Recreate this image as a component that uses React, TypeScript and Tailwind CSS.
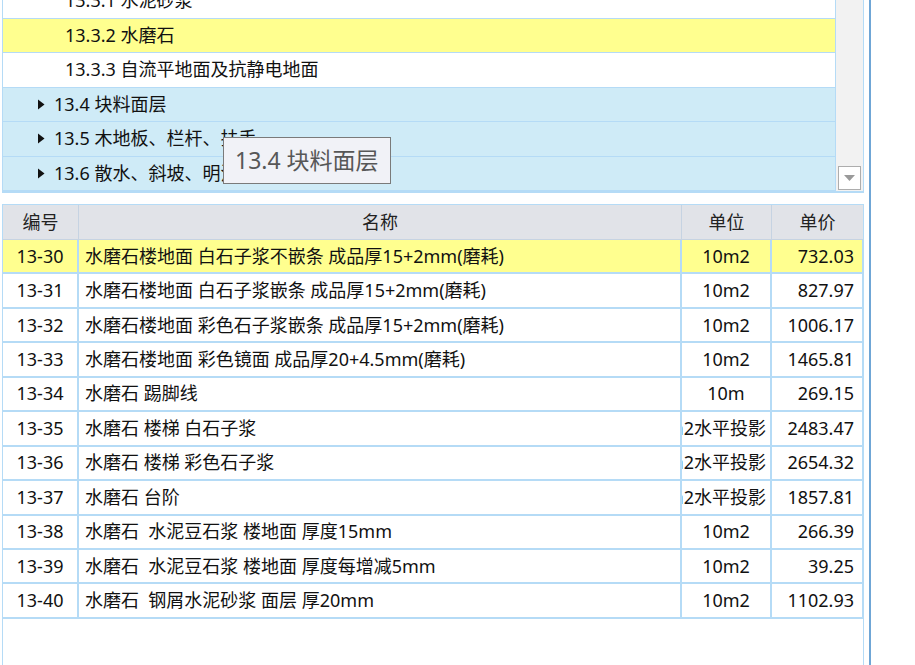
import React from 'react';

type TreeRow = { level: 2 | 3; text: string; tone: 'white' | 'yellow' | 'blue' };

const treeRows: TreeRow[] = [
  { level: 3, text: '13.3.1 水泥砂浆', tone: 'white' },
  { level: 3, text: '13.3.2 水磨石', tone: 'yellow' },
  { level: 3, text: '13.3.3 自流平地面及抗静电地面', tone: 'white' },
  { level: 2, text: '13.4 块料面层', tone: 'blue' },
  { level: 2, text: '13.5 木地板、栏杆、扶手', tone: 'blue' },
  { level: 2, text: '13.6 散水、斜坡、明沟', tone: 'blue' },
];

const items = [
  { code: '13-30', name: '水磨石楼地面 白石子浆不嵌条 成品厚15+2mm(磨耗)', unit: '10m2', price: '732.03' },
  { code: '13-31', name: '水磨石楼地面 白石子浆嵌条 成品厚15+2mm(磨耗)', unit: '10m2', price: '827.97' },
  { code: '13-32', name: '水磨石楼地面 彩色石子浆嵌条 成品厚15+2mm(磨耗)', unit: '10m2', price: '1006.17' },
  { code: '13-33', name: '水磨石楼地面 彩色镜面 成品厚20+4.5mm(磨耗)', unit: '10m2', price: '1465.81' },
  { code: '13-34', name: '水磨石 踢脚线', unit: '10m', price: '269.15' },
  { code: '13-35', name: '水磨石 楼梯 白石子浆', unit: '10m2水平投影', price: '2483.47' },
  { code: '13-36', name: '水磨石 楼梯 彩色石子浆', unit: '10m2水平投影', price: '2654.32' },
  { code: '13-37', name: '水磨石 台阶', unit: '10m2水平投影', price: '1857.81' },
  { code: '13-38', name: '水磨石  水泥豆石浆 楼地面 厚度15mm', unit: '10m2', price: '266.39' },
  { code: '13-39', name: '水磨石  水泥豆石浆 楼地面 厚度每增减5mm', unit: '10m2', price: '39.25' },
  { code: '13-40', name: '水磨石  钢屑水泥砂浆 面层 厚20mm', unit: '10m2', price: '1102.93' },
];

const toneBg = {
  white: 'bg-white',
  yellow: 'bg-[#ffff8f]',
  blue: 'bg-[#cfebf7]',
};

const Caret = () => (
  <svg width="8" height="11" viewBox="0 0 8 11" className="shrink-0">
    <path d="M1 0.5 L7.5 5.5 L1 10.5 Z" fill="#111" />
  </svg>
);

const App: React.FC = () => {
  return (
    <div
      className="w-[915px] h-[665px] bg-white overflow-hidden flex text-[18px] text-[#111]"
      style={{ fontFamily: '"Noto Sans", "Noto Sans CJK SC", sans-serif' }}
    >
      {/* left column */}
      <div className="ml-[2px] w-[862px] flex flex-col">
        {/* tree panel */}
        <div className="relative h-[193px] flex border-l border-r border-b-2 border-[#b5dbf6] overflow-hidden">
          <div className="flex-1 overflow-hidden border-r border-[#b5dbf6]">
            <div className="-mt-[16px]">
              {treeRows.map((r) => (
                <div
                  key={r.text}
                  className={`h-[34.5px] flex items-center border-b border-[#b5dbf6] ${toneBg[r.tone]} ${
                    r.level === 3 ? 'pl-[62px]' : 'pl-[34px]'
                  }`}
                >
                  {r.level === 2 && <Caret />}
                  <span className={`whitespace-nowrap ${r.level === 2 ? 'ml-[9px]' : ''}`}>{r.text}</span>
                </div>
              ))}
            </div>
          </div>
          {/* scrollbar */}
          <div className="w-[27px] bg-[#f2f2f2] flex flex-col justify-end items-center pb-[1px]">
            <div className="w-[23px] h-[24px] bg-white border border-[#adadad] flex items-center justify-center">
              <svg width="11" height="6" viewBox="0 0 11 6">
                <path d="M0 0 H11 L5.5 6 Z" fill="#9a9a9a" />
              </svg>
            </div>
          </div>
          {/* tooltip */}
          <div className="absolute left-[220px] top-[137px] w-[168px] h-[47px] bg-[#f1f2f7] border border-[#7a7a7a] flex items-center pl-[11px] text-[23px] text-[#575757] whitespace-nowrap">
            13.4 块料面层
          </div>
        </div>

        {/* table panel */}
        <div className="mt-[11px] flex-1 border-l border-r border-t border-[#b5dbf6] flex flex-col">
          <div className="grid grid-cols-[76px_603px_90px_91px] h-[35px] bg-[#e1e3e8] border-b border-[#c6d3e2]">
            {['编号', '名称', '单位', '单价'].map((h, i) => (
              <div
                key={h}
                className={`flex items-center justify-center text-[#222] ${i < 3 ? 'border-r border-[#c6d3e2]' : ''}`}
              >
                {h}
              </div>
            ))}
          </div>
          {items.map((it, idx) => {
            const overflow = it.unit.length > 5;
            return (
              <div
                key={it.code}
                className={`grid grid-cols-[76px_603px_90px_91px] h-[34.45px] border-b-2 border-[#b5dbf6] ${
                  idx === 0 ? 'bg-[#ffff8f]' : 'bg-white'
                }`}
              >
                <div className="flex items-center justify-center border-r-2 border-[#b5dbf6]">{it.code}</div>
                <div className="flex items-center pl-[6px] border-r-2 border-[#b5dbf6] whitespace-pre overflow-hidden">
                  {it.name}
                </div>
                <div
                  className={`flex items-center border-r-2 border-[#b5dbf6] whitespace-nowrap overflow-hidden ${
                    overflow ? 'justify-end pr-[4px]' : 'justify-center'
                  }`}
                >
                  {it.unit}
                </div>
                <div className="flex items-center justify-end pr-[8px] border-r border-[#b5dbf6]">{it.price}</div>
              </div>
            );
          })}
        </div>
      </div>

      {/* right divider */}
      <div className="ml-[5px] w-[2px] h-full bg-[#6fa6d6]" />
    </div>
  );
};

export default App;
